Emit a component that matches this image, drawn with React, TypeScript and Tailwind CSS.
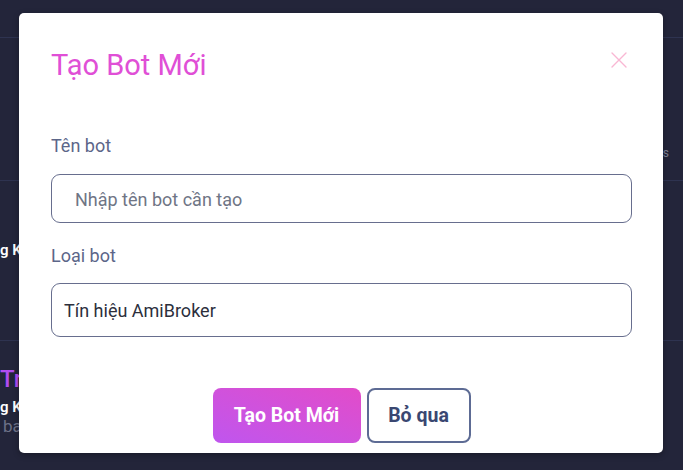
import React from "react";

export default function App() {
  return (
    <div
      className="relative w-[683px] h-[470px] overflow-hidden bg-[#23253a]"
      style={{ fontFamily: "Roboto, 'Noto Sans', sans-serif" }}
    >
      {/* background page */}
      <div className="flex flex-col">
        <div className="h-[38px] border-b border-[#2e3350]" />
        <div className="h-[143px] border-b border-[#2e3350] flex justify-end items-start pt-[108px]">
          <span className="text-[12px] leading-[14px] text-[#7d8197] mr-[14px]">s</span>
        </div>
        <div className="h-[160px] border-b border-[#2e3350] pt-[60px]">
          <div className="w-[19px] overflow-hidden text-[15px] leading-[18px] font-semibold text-white whitespace-nowrap">g Kết</div>
        </div>
        <div className="pt-[24px] w-[19px] overflow-hidden">
          <div className="text-[24px] leading-[28px] font-medium text-[#b04df0] whitespace-nowrap">Trend</div>
          <div className="text-[15px] leading-[18px] font-semibold text-white whitespace-nowrap mt-[5px]">g Kết</div>
          <div className="text-[17px] leading-[20px] text-[#6d7188] whitespace-nowrap flex items-center">
            <span className="w-[2px] h-[8px] bg-[#8a3a55] mr-[3px]" />
            <span>bao</span>
          </div>
        </div>
      </div>

      {/* modal */}
      <div className="absolute left-[19px] top-[13px] w-[644px] h-[440px] bg-white rounded-[5px] shadow-[0_2px_6px_rgba(0,0,0,0.3)] flex flex-col pl-[32px] pr-[31px] pt-[36px]">
        <div className="flex justify-between items-start">
          <h2 className="text-[29px] leading-[32px] font-normal text-[#e04fd6]">Tạo Bot Mới</h2>
          <svg
            width="16"
            height="16"
            viewBox="0 0 16 16"
            className="mt-[3px] mr-[5px]"
            stroke="#f9b7d3"
            strokeWidth="1.4"
            strokeLinecap="round"
          >
            <path d="M1 1 L15 15 M15 1 L1 15" />
          </svg>
        </div>

        <label className="mt-[53px] text-[18px] leading-[24px] text-[#5c6689]">Tên bot</label>
        <div className="mt-[16px] h-[49px] rounded-[9px] border-[1.5px] border-[#676e8e] flex items-center pl-[23px] pt-[2px]">
          <span className="text-[18px] leading-[24px] text-[#6f7585]">Nhập tên bot cần tạo</span>
        </div>

        <label className="mt-[21px] text-[18px] leading-[24px] text-[#5c6689]">Loại bot</label>
        <div className="mt-[15px] h-[54px] rounded-[9px] border-[1.5px] border-[#676e8e] flex items-center pl-[12px] pt-[2px]">
          <span className="text-[18px] leading-[24px] text-[#2c2f3c]">Tín hiệu AmiBroker</span>
        </div>

        <div className="mt-[51px] flex justify-center gap-[6px]">
          <button className="w-[148px] h-[55px] rounded-[8px] bg-gradient-to-tr from-[#bf55ee] to-[#e24bc9] text-white text-[19.5px] font-bold">
            Tạo Bot Mới
          </button>
          <button className="w-[104px] h-[55px] rounded-[8px] border-2 border-[#5d6b94] bg-white text-[#3a4771] text-[19.5px] font-bold">
            Bỏ qua
          </button>
        </div>
      </div>
    </div>
  );
}
